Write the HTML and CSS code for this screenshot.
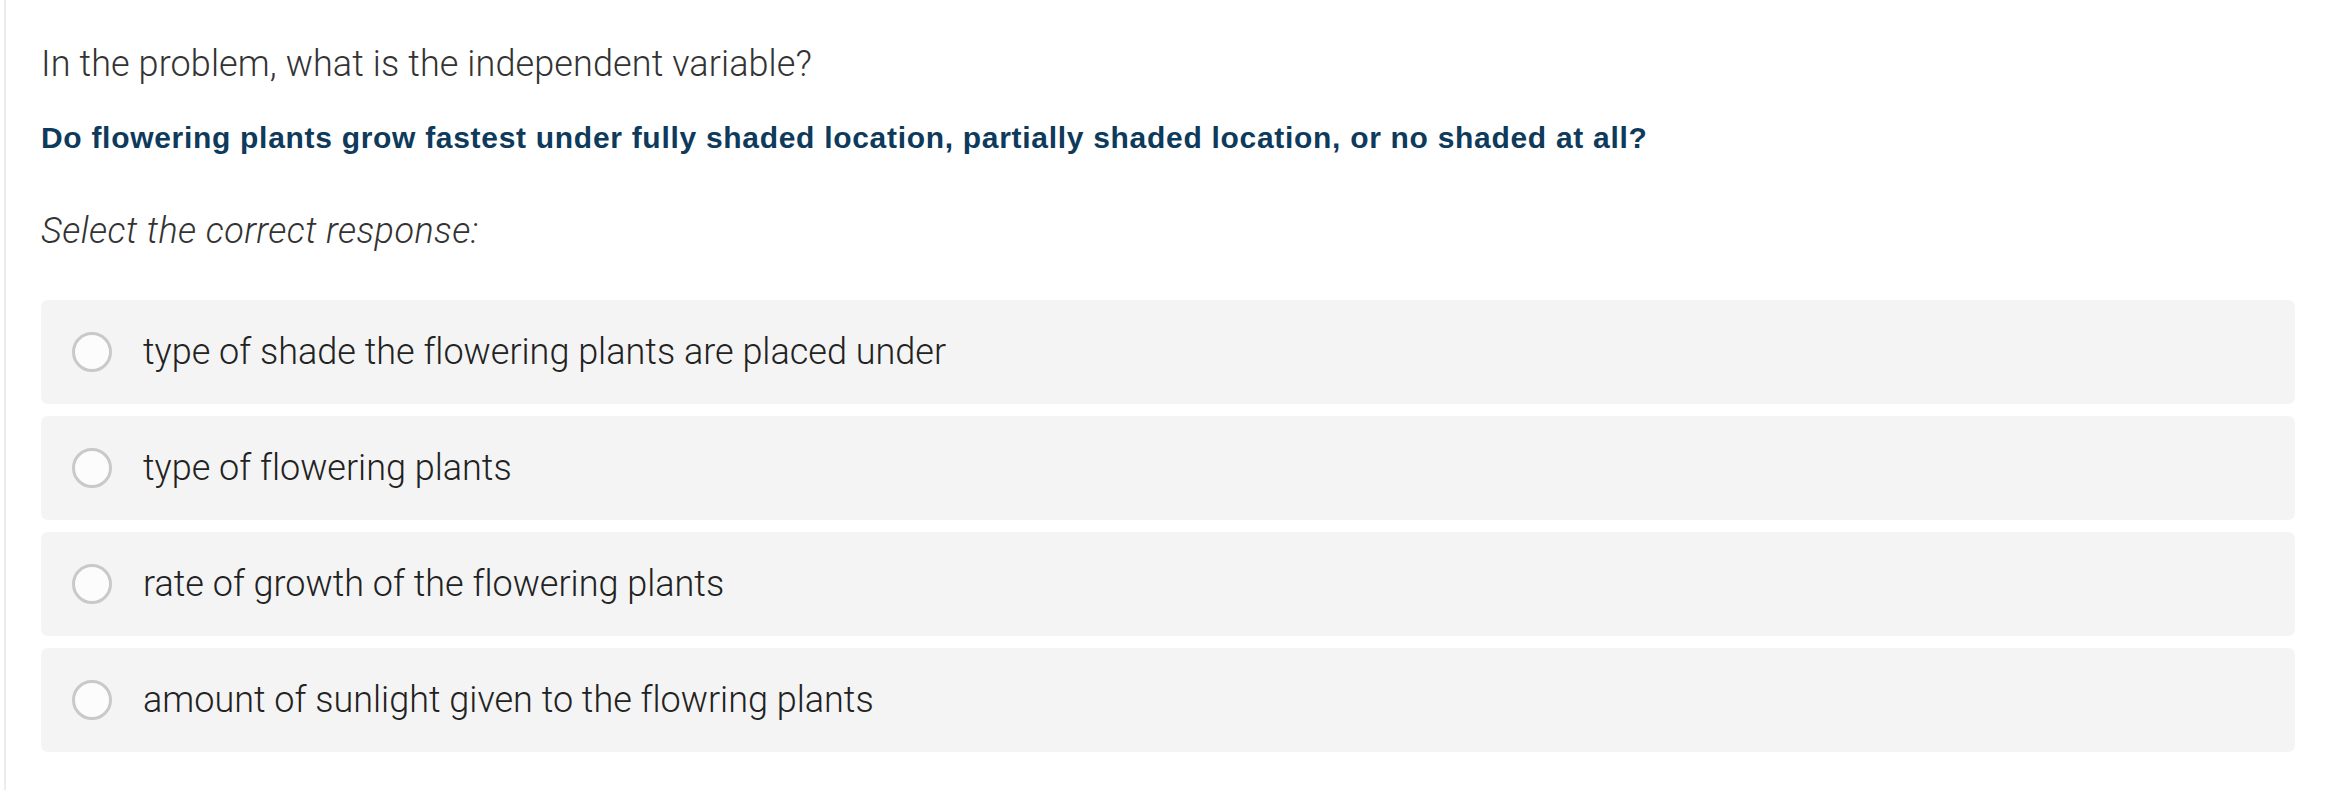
FILE: index.html
```html
<!DOCTYPE html>
<html lang="en">
<head>
<meta charset="utf-8">
<title>Question</title>
<link rel="stylesheet" href="styles.css">
</head>
<body>
<div class="panel">
  <p class="prompt">In the problem, what is the independent variable?</p>
  <p class="question">Do flowering plants grow fastest under fully shaded location, partially shaded location, or no shaded at all?</p>
  <p class="instruction">Select the correct response:</p>
  <div class="options">
    <label class="option"><span class="radio"></span><span class="label">type of shade the flowering plants are placed under</span></label>
    <label class="option"><span class="radio"></span><span class="label">type of flowering plants</span></label>
    <label class="option"><span class="radio"></span><span class="label">rate of growth of the flowering plants</span></label>
    <label class="option"><span class="radio"></span><span class="label">amount of sunlight given to the flowring plants</span></label>
  </div>
</div>
</body>
</html>
```
FILE: styles.css
```css
html, body {
  margin: 0;
  padding: 0;
  background: #ffffff;
}
.panel {
  margin-left: 4px;
  border-left: 2px solid #ececec;
  padding: 44px 34px 38px 35px;
  min-height: 708px;
  font-variant-ligatures: none;
}
.prompt {
  margin: 0;
  font-family: Roboto, "Liberation Sans", sans-serif;
  font-weight: 300;
  font-size: 36px;
  line-height: 41px;
  letter-spacing: 0.1px;
  color: #333333;
}
.question {
  margin: 36px 0 0 0;
  font-family: "Liberation Sans", Arial, sans-serif;
  font-weight: 700;
  font-size: 30px;
  line-height: 33px;
  letter-spacing: 0.7px;
  color: #0e3a5c;
}
.instruction {
  margin: 57px 0 0 0;
  font-family: Roboto, "Liberation Sans", sans-serif;
  font-weight: 300;
  font-style: italic;
  font-size: 36px;
  line-height: 41px;
  letter-spacing: 0.45px;
  color: #333333;
}
.options {
  margin-top: 48px;
  display: flex;
  flex-direction: column;
  gap: 12px;
}
.option {
  display: flex;
  align-items: center;
  height: 104px;
  padding-left: 31px;
  background: #f4f4f4;
  border-radius: 7px;
  gap: 31px;
}
.radio {
  flex: none;
  width: 34px;
  height: 34px;
  border: 3px solid #c9c9c9;
  border-radius: 50%;
  background: #fcfcfc;
}
.label {
  font-family: Roboto, "Liberation Sans", sans-serif;
  font-weight: 300;
  font-size: 36px;
  line-height: 41px;
  color: #222222;
}
```
